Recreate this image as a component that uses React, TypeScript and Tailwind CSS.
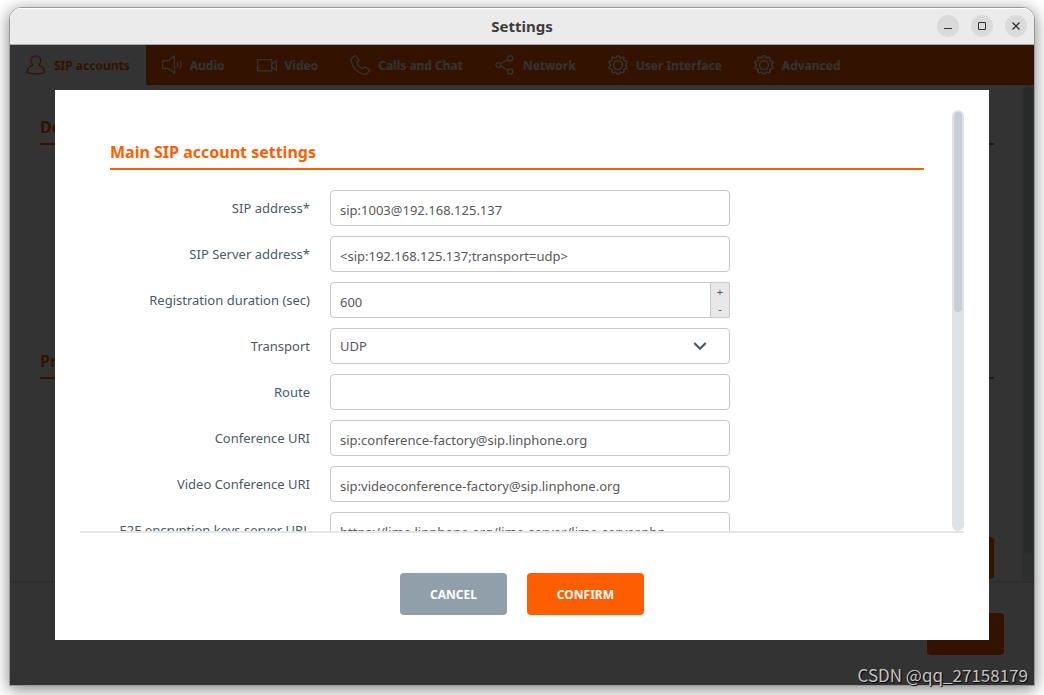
import React, { useState } from 'react';

const iconProps = {
  width: 20,
  height: 20,
  viewBox: '0 0 20 20',
  fill: 'none',
  stroke: 'currentColor',
  strokeLinejoin: 'round' as const,
  'aria-hidden': true,
};

const UserIcon = () => (
  <svg {...iconProps} strokeWidth="1.3">
    <path d="M7 10.2C5.4 9 4.8 7.3 4.8 5.6 4.8 2.8 7 .8 9.8.8s5 2 5 4.8c0 1.700-.6 3.400-2.200 4.600 3.600 1.200 5.700 3.600 5.900 6.600 0 .5-.3 1-.8 1.100-4.900 1.300-10.900 1.300-15.800 0-.5-.1-.8-.6-.8-1.100.2-3 2.300-5.400 5.900-6.600z" />
  </svg>
);

const SpeakerIcon = () => (
  <svg {...iconProps} strokeWidth="1.2">
    <path d="M.7 5.700h5.600L12.400 1v17.200l-6.100-4.600H.7z" />
    <path d="M15 7.300c1 1.500 1 3.500 0 5M17.500 5.900c1.700 2.300 1.700 5.500 0 7.800" strokeWidth="1.200" />
  </svg>
);

const CameraIcon = () => (
  <svg {...iconProps} strokeWidth="1.3">
    <path d="M.7 4.700h14v11.200H.7zM14.700 8.900l4.700-3.600v10.200l-4.700-3.600" />
  </svg>
);

const PhoneIcon = () => (
  <svg {...iconProps} strokeWidth="1.3">
    <path d="M2.600 2.400 5 .8c.5-.3 1-.2 1.300.3l2.500 3.700c.3.500.2 1-.3 1.300L6.700 7.400c.8 2.500 3.200 5 5.900 6.300l1.800-1.700c.4-.4.900-.4 1.300 0l3.300 2.700c.5.400.5.900.2 1.300l-1.700 2.200c-.9 1-2.600 1.300-4.300.9C7 17.600 2 11.800 1.200 6.200c-.2-1.600.3-3 1.400-3.800z" />
  </svg>
);

const ShareIcon = () => (
  <svg {...iconProps} strokeWidth="1.3">
    <circle cx="3.400" cy="10" r="2.400" />
    <circle cx="15.200" cy="3.400" r="2.600" />
    <circle cx="15.200" cy="16.600" r="2.600" />
    <path d="m5.600 8.900 7.300-4.200M5.600 11.100l7.300 4.200" />
  </svg>
);

// Outline of a ten-tooth cog, four points per tooth
const gearPoints = Array.from({ length: 40 }, (_, i) => {
  const angle = ((i - 0.5) * Math.PI) / 20;
  const radius = i % 4 < 2 ? 9.3 : 7.7;
  return `${(10 + radius * Math.sin(angle)).toFixed(2)},${(10 - radius * Math.cos(angle)).toFixed(2)}`;
}).join(' ');

const GearIcon = () => (
  <svg {...iconProps} strokeWidth="1.5">
    <polygon points={gearPoints} />
    <circle cx="10" cy="10" r="4.400" />
  </svg>
);

const tabs = [
  { label: 'SIP accounts', icon: UserIcon },
  { label: 'Audio', icon: SpeakerIcon },
  { label: 'Video', icon: CameraIcon },
  { label: 'Calls and Chat', icon: PhoneIcon },
  { label: 'Network', icon: ShareIcon },
  { label: 'User Interface', icon: GearIcon },
  { label: 'Advanced', icon: GearIcon },
];

const fieldClass =
  'w-full h-9 rounded border border-[#c8c8c8] bg-white px-[9px] pt-1 text-[13px] text-[#595759] outline-none focus:border-[#ff5e00]';

const TitleBar: React.FC = () => (
  <header className="grid grid-cols-[1fr_auto_1fr] items-center h-[37px] shrink-0 px-[7px] bg-[#ebebeb] border-t border-t-white border-b border-b-[#aaaaaa]">
    <h1 className="col-start-2 pb-0.5 text-[15px] leading-5 font-bold text-[#3d3d3d]">Settings</h1>
    <div className="flex justify-end gap-3 pb-px text-[#333]">
      <button className="flex items-center justify-center size-[22px] rounded-full bg-[#dadada]" aria-label="Minimize">
        <svg width="8" height="8" viewBox="0 0 8 8" stroke="currentColor"><path d="M0 6.500h8" /></svg>
      </button>
      <button className="flex items-center justify-center size-[22px] rounded-full bg-[#dadada]" aria-label="Maximize">
        <svg width="8" height="8" viewBox="0 0 8 8" fill="none" stroke="currentColor"><path d="M.5.500h7v7h-7z" /></svg>
      </button>
      <button className="flex items-center justify-center size-[22px] rounded-full bg-[#dadada]" aria-label="Close">
        <svg width="8" height="8" viewBox="0 0 8 8" stroke="currentColor" strokeWidth="1.300"><path d="m.5.500 7 7m0-7-7 7" /></svg>
      </button>
    </div>
  </header>
);

const AccountsPage: React.FC = () => (
  <div className="flex flex-col h-full bg-white">
    <nav className="flex h-10 shrink-0 bg-[#ff5e00]">
      {tabs.map(({ label, icon: Icon }, index) => (
        <button
          key={label}
          className={`flex items-center gap-2 px-4 text-xs font-bold whitespace-nowrap ${
            index === 0 ? 'bg-white text-[#ff5e00]' : 'text-white'
          }`}
        >
          <Icon />
          <span className="pt-0.5">{label}</span>
        </button>
      ))}
    </nav>
    <div className="flex flex-1 min-h-0 border-b-2 border-[#e6e6e6]">
      <div className="flex flex-col flex-1 pl-[30px] pr-7 pt-[30px]">
        <h2 className="h-[30px] shrink-0 border-b-2 border-[#ff5e00] font-bold text-[#ff5e00]">Default identity</h2>
        <h2 className="h-[30px] shrink-0 mt-[204px] border-b-2 border-[#ff5e00] font-bold text-[#ff5e00]">Proxy accounts</h2>
        <button className="self-end mt-auto mb-[2px] h-[42px] shrink-0 rounded bg-[#ff5e00] px-[30px] text-xs font-bold text-white">
          ADD ACCOUNT
        </button>
      </div>
      <div className="w-3 rounded-md bg-[#dfe3e6] px-[2px] pt-[2px] pb-7">
        <div className="h-full rounded bg-[#c8ccd4]" />
      </div>
    </div>
    <footer className="flex items-center justify-end h-[102px] shrink-0 px-[30px]">
      <button className="h-[42px] rounded bg-[#ff5e00] px-[30px] text-xs font-bold text-white">OK</button>
    </footer>
  </div>
);

type RowProps = { id: string; label: string; children: React.ReactNode };

const Row: React.FC<RowProps> = ({ id, label, children }) => (
  <div className="flex items-center gap-5">
    <label htmlFor={id} className="w-[200px] shrink-0 text-right text-[13px] leading-5 text-[#4b5964]">
      {label}
    </label>
    <div className="flex-1 max-w-[400px]">{children}</div>
  </div>
);

const TextRow: React.FC<{ id: string; label: string; value?: string }> = ({ id, label, value = '' }) => (
  <Row id={id} label={label}>
    <input id={id} type="text" defaultValue={value} spellCheck={false} className={fieldClass} />
  </Row>
);

const AccountDialog: React.FC = () => {
  const [duration, setDuration] = useState(600);

  return (
    <form
      role="dialog"
      aria-labelledby="account-title"
      onSubmit={(e) => e.preventDefault()}
      className="flex flex-col w-full h-full bg-white px-[25px] pt-5 pb-[25px]"
    >
      <div className="flex flex-1 min-h-0 border-b-2 border-[#e6e6e6]">
        <div className="flex-1 overflow-y-auto [scrollbar-width:none] pl-[30px] pr-7 pt-[30px]">
          <h2 id="account-title" className="h-[30px] border-b-2 border-[#ff5e00] font-bold text-[#ff5e00]">
            Main SIP account settings
          </h2>
          <div className="flex flex-col gap-[10px] mt-5">
            <TextRow id="sip-address" label="SIP address*" value="sip:1003@192.168.125.137" />
            <TextRow id="server" label="SIP Server address*" value="<sip:192.168.125.137;transport=udp>" />
            <Row id="duration" label="Registration duration (sec)">
              <div className="flex h-9 rounded-l border border-[#c8c8c8]">
                <input
                  id="duration"
                  type="text"
                  inputMode="numeric"
                  value={duration}
                  onChange={(e) => setDuration(Number(e.target.value) || 0)}
                  className="flex-1 min-w-0 px-[9px] pt-1.5 text-[13px] text-[#595759] outline-none"
                />
                <div className="flex flex-col w-[19px] border-l border-[#c8c8c8] bg-[#e8e8e8] text-[11px] text-[#4b5964]">
                  <button type="button" aria-label="Increase" className="flex-1 leading-4" onClick={() => setDuration(duration + 1)}>
                    +
                  </button>
                  <button type="button" aria-label="Decrease" className="flex-1 leading-4" onClick={() => setDuration(Math.max(0, duration - 1))}>
                    -
                  </button>
                </div>
              </div>
            </Row>
            <Row id="transport" label="Transport">
              <div className="relative">
                <select
                  id="transport"
                  defaultValue="UDP"
                  className="block w-full h-9 appearance-none rounded border border-[#c8c8c8] bg-white px-[9px] pt-0.5 text-[13px] text-[#595759] outline-none"
                >
                  <option>UDP</option>
                  <option>TCP</option>
                  <option>TLS</option>
                </select>
                <svg
                  width="14"
                  height="10"
                  viewBox="0 0 14 10"
                  fill="none"
                  stroke="currentColor"
                  strokeWidth="2.2"
                  aria-hidden
                  className="absolute right-[23px] top-[13px] text-[#4b5964] pointer-events-none"
                >
                  <path d="m1.300 2 5.700 5.700L12.700 2" />
                </svg>
              </div>
            </Row>
            <TextRow id="route" label="Route" />
            <TextRow id="conference" label="Conference URI" value="sip:conference-factory@sip.linphone.org" />
            <TextRow id="video-conference" label="Video Conference URI" value="sip:videoconference-factory@sip.linphone.org" />
            <TextRow
              id="e2e-server"
              label="E2E encryption keys server URL"
              value="https://lime.linphone.org/lime-server/lime-server.php"
            />
          </div>
        </div>
        <div className="w-3 rounded-md bg-[#dfe3e6] p-[2px]">
          <div className="h-[48%] rounded bg-[#c8ccd4]" />
        </div>
      </div>
      <div className="flex justify-center gap-5 mt-10 text-xs font-bold text-white">
        <button type="button" className="h-[42px] rounded bg-[#919faa] px-[30px] pt-0.5">
          CANCEL
        </button>
        <button type="submit" className="h-[42px] rounded bg-[#ff5e00] px-[30px] pt-0.5">
          CONFIRM
        </button>
      </div>
    </form>
  );
};

const App: React.FC = () => (
  <div className="relative h-screen overflow-hidden bg-white px-[9px] pt-[7px] pb-[9px] font-['Noto_Sans',sans-serif]">
    <div className="flex flex-col h-full overflow-hidden rounded-t-xl border border-[#999] shadow-[0_3px_16px_rgba(0,0,0,0.5)]">
      <TitleBar />
      <main className="relative flex-1 min-h-0">
        <AccountsPage />
        <div className="absolute inset-0 bg-black/80 p-[45px]">
          <AccountDialog />
        </div>
      </main>
    </div>
    <span className="absolute right-4 bottom-2.5 font-['Noto_Sans_CJK_SC',sans-serif] text-[17px] leading-5 text-[#c4c4c4] [text-shadow:1px_1px_1px_#000]">
      CSDN @qq_27158179
    </span>
  </div>
);

export default App;
